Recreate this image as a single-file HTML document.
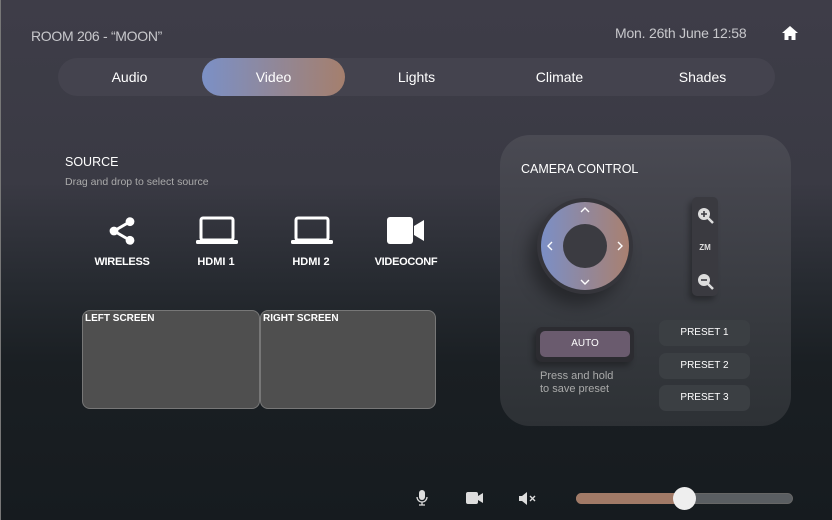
<!DOCTYPE html>
<html><head><style>
*{margin:0;padding:0;box-sizing:border-box}
body{width:832px;height:520px;overflow:hidden;font-family:"Liberation Sans",sans-serif;color:#fff;
background:linear-gradient(180deg,#3e3d48 0%,#3a3a44 35%,#262a30 55%,#1a1f23 70%,#161b1f 100%);position:relative}
.a{position:absolute}
.t{font-size:14px;color:#c8c8cc}
.nav{left:58px;top:58px;width:717px;height:38px;border-radius:19px;background:#44434e}
.tab{position:absolute;top:0;height:38px;line-height:38px;width:143px;text-align:center;font-size:14px}
.pill{background:linear-gradient(90deg,#7b90c6,#a57f6d);border-radius:19px}
.src{font-size:11px;font-weight:bold;text-align:center;width:90px}
.scr{background:#4f4f4f;border:1px solid #777;border-radius:8px;font-size:10px;font-weight:bold;padding:2px 2px}
.panel{left:500px;top:135px;width:291px;height:291px;border-radius:30px;background:linear-gradient(180deg,#4a4a53,#35383d 70%,#2d3135)}
.pre{width:91px;height:26px;border-radius:7px;background:#3b3f43;font-size:10px;text-align:center;line-height:26px;left:659px}
</style></head><body>
<div class="a" style="left:0;top:0;width:1px;height:520px;background:#777"></div>
<div class="a t" style="left:31px;top:28px;letter-spacing:-0.3px">ROOM 206 - “MOON”</div>
<div class="a t" style="left:615px;top:25px;letter-spacing:-0.2px">Mon. 26th June 12:58</div>
<svg class="a" style="left:781px;top:25px" width="18" height="16" viewBox="0 0 18 16"><path d="M9 1L1 8h2.5v7h4v-4h3v4h4V8H17z" fill="#fff"/></svg>
<div class="a nav">
<div class="tab" style="left:0">Audio</div>
<div class="tab pill" style="left:144px">Video</div>
<div class="tab" style="left:287px">Lights</div>
<div class="tab" style="left:430px">Climate</div>
<div class="tab" style="left:573px">Shades</div>
</div>
<div class="a" style="left:65px;top:155px;font-size:12.5px">SOURCE</div>
<div class="a" style="left:65px;top:176px;font-size:10.5px;color:#aaa">Drag and drop to select source</div>
<svg class="a" style="left:106px;top:215px" width="32" height="32" viewBox="0 0 24 24"><g fill="#fff"><circle cx="18" cy="5" r="3.3"/><circle cx="6" cy="12" r="3.3"/><circle cx="18" cy="19" r="3.3"/></g><path d="M6 12L18 5M6 12l12 7" stroke="#fff" stroke-width="2.2"/></svg>
<svg class="a" style="left:196px;top:216px" width="42" height="30" viewBox="0 0 42 30"><rect x="5" y="2" width="32" height="22" rx="2" fill="none" stroke="#fff" stroke-width="3"/><rect x="0" y="24" width="42" height="4" rx="1.5" fill="#fff"/></svg>
<svg class="a" style="left:291px;top:216px" width="42" height="30" viewBox="0 0 42 30"><rect x="5" y="2" width="32" height="22" rx="2" fill="none" stroke="#fff" stroke-width="3"/><rect x="0" y="24" width="42" height="4" rx="1.5" fill="#fff"/></svg>
<svg class="a" style="left:387px;top:217px" width="38" height="27" viewBox="0 0 38 27"><rect x="0" y="0" width="26" height="27" rx="3" fill="#fff"/><path d="M27 9l10-6v21l-10-6z" fill="#fff"/></svg>
<div class="a src" style="left:77px;top:256px;letter-spacing:-0.3px">WIRELESS</div>
<div class="a src" style="left:171px;top:256px">HDMI 1</div>
<div class="a src" style="left:266px;top:256px">HDMI 2</div>
<div class="a src" style="left:361px;top:256px;letter-spacing:-0.3px">VIDEOCONF</div>
<div class="a scr" style="left:82px;top:310px;width:178px;height:99px">LEFT SCREEN</div>
<div class="a scr" style="left:260px;top:310px;width:176px;height:99px">RIGHT SCREEN</div>
<div class="a panel"></div>
<div class="a" style="left:521px;top:162px;font-size:12.5px">CAMERA CONTROL</div>
<div class="a" style="left:537px;top:198px;width:96px;height:96px;border-radius:50%;background:#35353b;box-shadow:-8px 10px 16px rgba(0,0,0,.35)"></div>
<div class="a" style="left:541px;top:202px;width:88px;height:88px;border-radius:50%;background:linear-gradient(90deg,#7b8fc6,#a98070)"></div>
<div class="a" style="left:563px;top:224px;width:44px;height:44px;border-radius:50%;background:#3b3b41"></div>
<svg class="a" style="left:537px;top:198px" width="96" height="96" viewBox="0 0 96 96" fill="none" stroke="#fff" stroke-width="1.4"><path d="M44 14l4-4 4 4M44 82l4 4 4-4M15 44l-4 4 4 4M81 44l4 4-4 4"/></svg>
<div class="a" style="left:692px;top:197px;width:26px;height:99px;border-radius:5px;background:#3a3a40;box-shadow:-3px 4px 6px rgba(0,0,0,.3)"></div>
<svg class="a" style="left:697px;top:207px" width="18" height="18" viewBox="0 0 18 18"><circle cx="7" cy="7" r="6" fill="#ddd"/><path d="M11 11l5 5" stroke="#ddd" stroke-width="2.5"/><path d="M4 7h6M7 4v6" stroke="#3a3a40" stroke-width="1.6"/></svg>
<div class="a" style="left:692px;top:243px;width:26px;text-align:center;font-size:8px;font-weight:bold;color:#ddd">ZM</div>
<svg class="a" style="left:697px;top:273px" width="18" height="18" viewBox="0 0 18 18"><circle cx="7" cy="7" r="6" fill="#ddd"/><path d="M11 11l5 5" stroke="#ddd" stroke-width="2.5"/><path d="M4 7h6" stroke="#3a3a40" stroke-width="1.6"/></svg>
<div class="a" style="left:536px;top:327px;width:98px;height:35px;border-radius:6px;background:#2c2c31;box-shadow:-3px 4px 6px rgba(0,0,0,.3)"></div>
<div class="a" style="left:540px;top:331px;width:90px;height:26px;border-radius:5px;background:#6a5b6e;font-size:10px;text-align:center;line-height:26px">AUTO</div>
<div class="a" style="left:540px;top:370px;font-size:11px;color:#aaa;line-height:13px">Press and hold<br>to save preset</div>
<div class="a pre" style="top:320px">PRESET 1</div>
<div class="a pre" style="top:353px">PRESET 2</div>
<div class="a pre" style="top:385px">PRESET 3</div>
<svg class="a" style="left:416px;top:490px" width="12" height="16" viewBox="0 0 12 16"><rect x="3" y="0" width="6" height="10" rx="3" fill="#ddd"/><path d="M1 7a5 5 0 0 0 10 0M6 12v3M3 15h6" stroke="#ddd" stroke-width="1.3" fill="none"/></svg>
<svg class="a" style="left:466px;top:492px" width="18" height="12" viewBox="0 0 18 12"><rect x="0" y="0" width="12" height="12" rx="2" fill="#ddd"/><path d="M12 4l5-3v10l-5-3z" fill="#ddd"/></svg>
<svg class="a" style="left:519px;top:492px" width="18" height="13" viewBox="0 0 18 13"><path d="M0 4h3l5-4v13l-5-4H0z" fill="#ddd"/><path d="M11 4l5 5M16 4l-5 5" stroke="#ddd" stroke-width="1.4"/></svg>
<div class="a" style="left:576px;top:493px;width:217px;height:11px;border-radius:6px;background:#5a5e62;border:1px solid #666"></div>
<div class="a" style="left:576px;top:493px;width:108px;height:11px;border-radius:6px 0 0 6px;background:#a17a67"></div>
<div class="a" style="left:673px;top:487px;width:23px;height:23px;border-radius:50%;background:#eee"></div>
</body></html>
